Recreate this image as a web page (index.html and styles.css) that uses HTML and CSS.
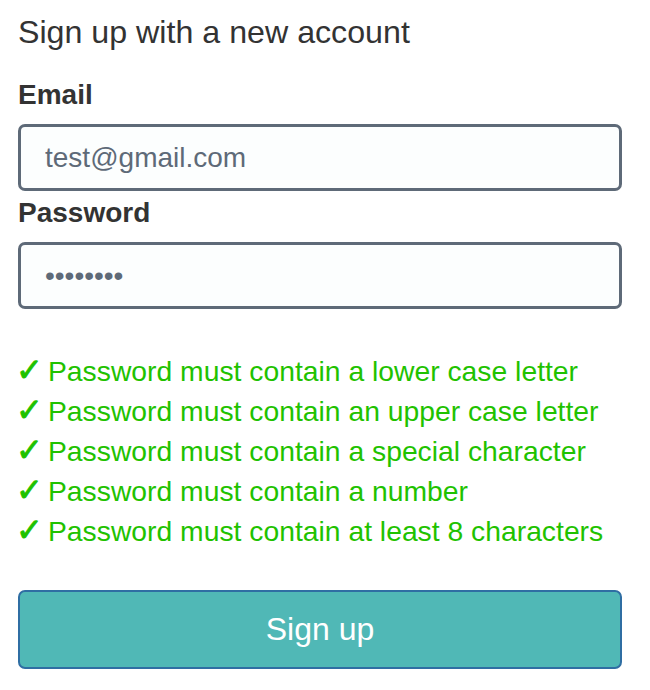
FILE: index.html
```html
<!DOCTYPE html>
<html lang="en">
<head>
<meta charset="utf-8">
<title>Sign up</title>
<link rel="stylesheet" href="styles.css">
</head>
<body>
<form class="signup">
  <h1 class="title">Sign up with a new account</h1>
  <label class="field-label" for="email">Email</label>
  <input class="field-input" id="email" type="text" value="test@gmail.com">
  <label class="field-label field-label--second" for="password">Password</label>
  <input class="field-input" id="password" type="password" value="password">
  <ul class="rules">
    <li class="rule"><span class="check">✓</span>Password must contain a lower case letter</li>
    <li class="rule"><span class="check">✓</span>Password must contain an upper case letter</li>
    <li class="rule"><span class="check">✓</span>Password must contain a special character</li>
    <li class="rule"><span class="check">✓</span>Password must contain a number</li>
    <li class="rule"><span class="check">✓</span>Password must contain at least 8 characters</li>
  </ul>
  <button class="submit" type="button">Sign up</button>
</form>
</body>
</html>
```

FILE: styles.css
```css
html, body {
  margin: 0;
  padding: 0;
  background: #ffffff;
}

body {
  font-family: "Liberation Sans", Arial, sans-serif;
  color: #333333;
}

.signup {
  display: flex;
  flex-direction: column;
  width: 604px;
  padding: 14px 0 0 18px;
}

.title {
  margin: 0;
  font-size: 32.2px;
  font-weight: normal;
  line-height: 37px;
  color: #333333;
}

.field-label {
  margin-top: 28px;
  font-size: 28px;
  font-weight: bold;
  line-height: 31px;
  color: #333333;
}

.field-label--second {
  margin-top: 6px;
}

.field-input {
  box-sizing: border-box;
  margin-top: 14px;
  width: 604px;
  height: 67px;
  padding: 0 24px;
  border: 3px solid #5e6a78;
  border-radius: 7px;
  background: #fcfefe;
  font-family: "Liberation Sans", Arial, sans-serif;
  font-size: 28px;
  color: #5e6a78;
  outline: none;
}

.rules {
  list-style: none;
  margin: 42px 0 0;
  padding: 0;
}

.rule {
  display: flex;
  align-items: baseline;
  height: 40px;
  font-size: 28.3px;
  line-height: 40px;
  color: #1fc200;
}

.check {
  width: 32px;
  margin-left: -2px;
  flex: none;
  font-family: "DejaVu Sans", sans-serif;
  font-size: 32px;
  font-weight: bold;
  line-height: 20px;
  -webkit-text-stroke: 1px #1fc200;
}

.submit {
  box-sizing: border-box;
  margin-top: 39px;
  width: 604px;
  height: 79px;
  border: 2px solid #2f6ea3;
  border-radius: 7px;
  background: #50b8b6;
  color: #ffffff;
  font-family: "Liberation Sans", Arial, sans-serif;
  font-size: 32px;
}
```
